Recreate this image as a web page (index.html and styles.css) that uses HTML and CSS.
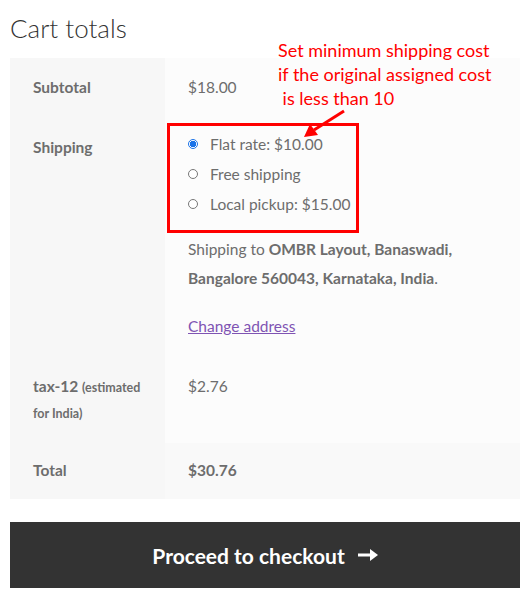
FILE: index.html
```html
<!DOCTYPE html>
<html lang="en">
<head>
    <meta charset="UTF-8">
    <meta name="viewport" content="width=device-width, initial-scale=1.0">
    <title>Cart totals</title>
    <link rel="stylesheet" href="styles.css">
</head>
<body>
<div class="cart-totals">
    <h2>Cart totals</h2>
    <table class="totals">
        <tr class="subtotal">
            <th>Subtotal</th>
            <td>$18.00</td>
        </tr>
        <tr class="shipping">
            <th>Shipping</th>
            <td>
                <ul class="methods">
                    <li><span class="radio checked"></span>Flat rate: $10.00</li>
                    <li><span class="radio"></span>Free shipping</li>
                    <li><span class="radio"></span>Local pickup: $15.00</li>
                </ul>
                <p class="destination">Shipping to <strong>OMBR Layout, Banaswadi, Bangalore 560043, Karnataka, India</strong>.</p>
                <a href="#" class="change-address">Change address</a>
            </td>
        </tr>
        <tr class="tax">
            <th>tax-12 <small>(estimated for India)</small></th>
            <td>$2.76</td>
        </tr>
        <tr class="order-total">
            <th>Total</th>
            <td><strong>$30.76</strong></td>
        </tr>
    </table>
    <a href="#" class="checkout-button">Proceed to checkout
        <svg class="arrow" width="20" height="14" viewBox="0 0 20 14">
            <rect x="0" y="5.5" width="13" height="3" fill="#fff"/>
            <polygon points="12,1 20,7 12,13" fill="#fff"/>
        </svg>
    </a>

    <!-- annotation -->
    <div class="note">Set minimum shipping cost<br>if the original assigned cost<br>&nbsp;is less than 10</div>
    <div class="note-box"></div>
    <svg class="note-arrow" width="60" height="40" viewBox="0 0 60 40">
        <line x1="52" y1="5" x2="22" y2="24" stroke="#f00" stroke-width="3"/>
        <polygon points="12,31 18,18 26,29" fill="#f00"/>
    </svg>
</div>
</body>
</html>
```

FILE: styles.css
```css
body {
    margin: 0;
    font-family: Lato, "Open Sans", sans-serif;
    color: #6d6d6d;
    background: #fff;
}

.cart-totals {
    position: relative;
    padding: 0 10px;
}

h2 {
    margin: 0;
    padding: 12px 0 13px;
    font-size: 26px;
    font-weight: 300;
    line-height: 33px;
    color: #333;
}

.totals {
    width: 100%;
    border-collapse: collapse;
    font-size: 15.5px;
    line-height: 28px;
}

.totals th,
.totals td {
    vertical-align: top;
    text-align: left;
    padding: 15px 23px 17px;
}

.totals th {
    width: 109px;
    background: #f7f7f7;
    font-weight: 700;
}

.totals td {
    background: #fcfcfc;
}

.shipping td {
    padding-top: 11px;
    padding-bottom: 14px;
}

.methods {
    list-style: none;
    margin: 0;
    padding: 0;
}

.methods li {
    display: flex;
    align-items: center;
    height: 30px;
}

.radio {
    width: 8px;
    height: 8px;
    border: 1px solid #777;
    border-radius: 50%;
    margin: 0 12px 0 0;
    background: #fff;
}

.radio.checked {
    border-color: #1a73e8;
    background: radial-gradient(circle, #1a73e8 0 3px, #fff 3.5px);
}

.destination {
    margin: 16px 0 19px;
    line-height: 29px;
}

.destination strong {
    font-weight: 700;
}

.change-address {
    color: #7f54b3;
}

.tax th,
.tax td {
    padding-top: 20px;
    padding-bottom: 17px;
    line-height: 25px;
}

.tax small {
    font-size: 12.5px;
}

.order-total th,
.order-total td {
    padding-top: 13px;
    padding-bottom: 15px;
}

.order-total td {
    background: #f9f9f9;
}

.checkout-button {
    display: flex;
    align-items: center;
    justify-content: center;
    gap: 13px;
    height: 66px;
    margin-top: 23px;
    background: #333;
    color: #fff;
    font-size: 21px;
    font-weight: 700;
    text-decoration: none;
}

.note {
    position: absolute;
    top: 38px;
    left: 278px;
    color: #f00;
    font-size: 18px;
    line-height: 24px;
}

.note-box {
    position: absolute;
    top: 123px;
    left: 167px;
    width: 186px;
    height: 104px;
    border: 3px solid #f00;
}

.note-arrow {
    position: absolute;
    top: 106px;
    left: 292px;
}
```
